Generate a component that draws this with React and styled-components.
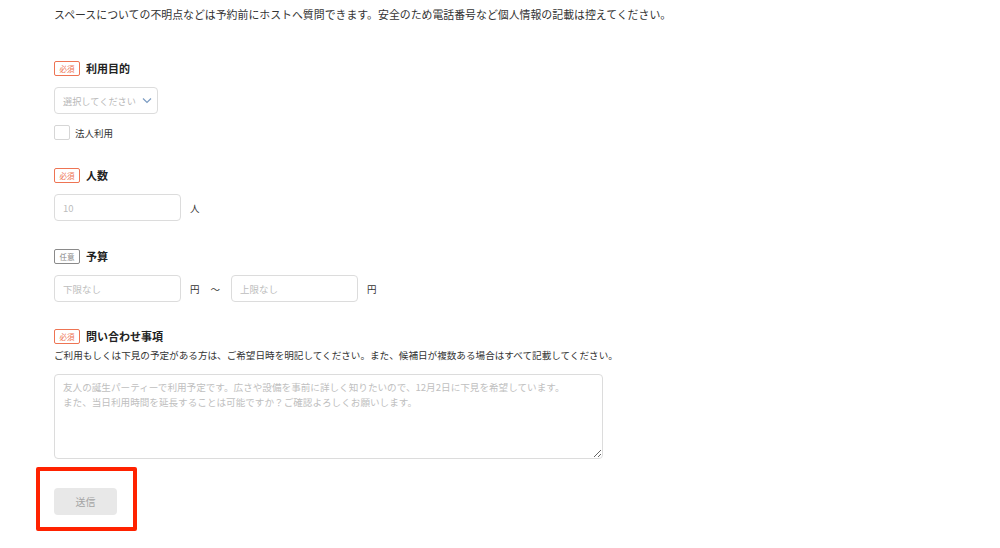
import React from 'react';
import styled, { createGlobalStyle } from 'styled-components';

const GlobalStyle = createGlobalStyle`
  body {
    margin: 0;
    background: #fff;
    font-family: "Noto Sans CJK JP", "Noto Sans", sans-serif;
    color: #333;
  }
`;

const Page = styled.div`
  box-sizing: border-box;
  min-height: 548px;
  padding: 4px 0 0 54px;
  width: 620px;
`;

const Lead = styled.p`
  margin: 0;
  font-size: 10.9px;
  line-height: 20px;
  white-space: nowrap;
  color: #333;
`;

const Section = styled.section`
  margin-top: ${(p) => p.top || 28}px;
`;

const Header = styled.div`
  display: flex;
  align-items: center;
  gap: 6px;
  height: 15px;
`;

const Badge = styled.span`
  box-sizing: border-box;
  display: inline-flex;
  align-items: center;
  justify-content: center;
  width: 26px;
  height: 15px;
  border: 1px solid ${(p) => (p.optional ? '#8a8a8a' : '#ee7453')};
  border-radius: 2px;
  font-size: 7.5px;
  color: ${(p) => (p.optional ? '#8a8a8a' : '#ee7453')};
  line-height: 1;
`;

const Label = styled.h3`
  margin: 0;
  font-size: 11px;
  line-height: 15px;
  font-weight: 700;
  color: #222;
`;

const Row = styled.div`
  display: flex;
  align-items: center;
  margin-top: 11px;
`;

const SelectBox = styled.div`
  box-sizing: border-box;
  display: flex;
  align-items: center;
  gap: 6px;
  width: 104px;
  height: 27px;
  padding: 0 0 0 8px;
  border: 1px solid #dcdcdc;
  border-radius: 4px;
  font-size: 9.2px;
  white-space: nowrap;
  color: #b9b9b9;
`;

const CheckRow = styled.label`
  display: flex;
  align-items: center;
  gap: 5px;
  height: 15px;
  margin-top: 11px;
  font-size: 9.5px;
  color: #333;
`;

const Check = styled.span`
  box-sizing: border-box;
  width: 16px;
  height: 15px;
  border: 1px solid #d6d6d6;
  border-radius: 2px;
`;

const TextInput = styled.input`
  box-sizing: border-box;
  width: 127px;
  height: 27px;
  padding: 0 8px;
  border: 1px solid #dcdcdc;
  border-radius: 4px;
  font-family: inherit;
  font-size: 9.5px;
  outline: none;
  &::placeholder {
    color: #bdbdbd;
  }
`;

const Unit = styled.span`
  font-size: 9.5px;
  color: #333;
  margin-left: ${(p) => p.left || 0}px;
  margin-right: ${(p) => p.right || 0}px;
`;

const Note = styled.p`
  margin: 4px 0 0;
  font-size: 9.6px;
  line-height: 14px;
  white-space: nowrap;
  color: #333;
`;

const Message = styled.textarea`
  display: block;
  box-sizing: border-box;
  width: 549px;
  height: 85px;
  margin-top: 12px;
  padding: 5px 8px;
  border: 1px solid #dcdcdc;
  border-radius: 4px;
  font-family: inherit;
  font-size: 9.6px;
  line-height: 15px;
  outline: none;
  &::placeholder {
    color: #c0c0c0;
  }
`;

const SubmitWrap = styled.div`
  position: relative;
  width: 63px;
  margin-top: 29px;
`;

const Submit = styled.button`
  display: block;
  width: 63px;
  height: 27px;
  border: none;
  border-radius: 4px;
  background: #e8e8e8;
  color: #a3a3a3;
  font-family: inherit;
  font-size: 10px;
`;

const Highlight = styled.div`
  position: absolute;
  left: -18px;
  top: -21px;
  width: 101px;
  height: 64px;
  box-sizing: border-box;
  border: 4.5px solid #ff2200;
  border-radius: 2px;
  pointer-events: none;
`;

const Chevron = () => (
  <svg width="10" height="7" viewBox="0 0 10 7">
    <polyline points="1,1.5 5,5.5 9,1.5" fill="none" stroke="#7c9cc2" strokeWidth="1.2" />
  </svg>
);

export default function App() {
  return (
    <Page>
      <GlobalStyle />
      <Lead>
        スペースについての不明点などは予約前にホストへ質問できます。安全のため電話番号など個人情報の記載は控えてください。
      </Lead>

      <Section top={37}>
        <Header>
          <Badge>必須</Badge>
          <Label>利用目的</Label>
        </Header>
        <Row>
          <SelectBox>
            選択してください
            <Chevron />
          </SelectBox>
        </Row>
        <CheckRow>
          <Check />
          法人利用
        </CheckRow>
      </Section>

      <Section>
        <Header>
          <Badge>必須</Badge>
          <Label>人数</Label>
        </Header>
        <Row>
          <TextInput placeholder="10" />
          <Unit left={9}>人</Unit>
        </Row>
      </Section>

      <Section>
        <Header>
          <Badge optional>任意</Badge>
          <Label>予算</Label>
        </Header>
        <Row>
          <TextInput placeholder="下限なし" />
          <Unit left={9} right={11}>円</Unit>
          <Unit right={11}>〜</Unit>
          <TextInput placeholder="上限なし" />
          <Unit left={9}>円</Unit>
        </Row>
      </Section>

      <Section top={27}>
        <Header>
          <Badge>必須</Badge>
          <Label>問い合わせ事項</Label>
        </Header>
        <Note>
          ご利用もしくは下見の予定がある方は、ご希望日時を明記してください。また、候補日が複数ある場合はすべて記載してください。
        </Note>
        <Message
          placeholder={
            '友人の誕生パーティーで利用予定です。広さや設備を事前に詳しく知りたいので、12月2日に下見を希望しています。\nまた、当日利用時間を延長することは可能ですか？ご確認よろしくお願いします。'
          }
        />
      </Section>

      <SubmitWrap>
        <Submit>送信</Submit>
        <Highlight />
      </SubmitWrap>
    </Page>
  );
}
